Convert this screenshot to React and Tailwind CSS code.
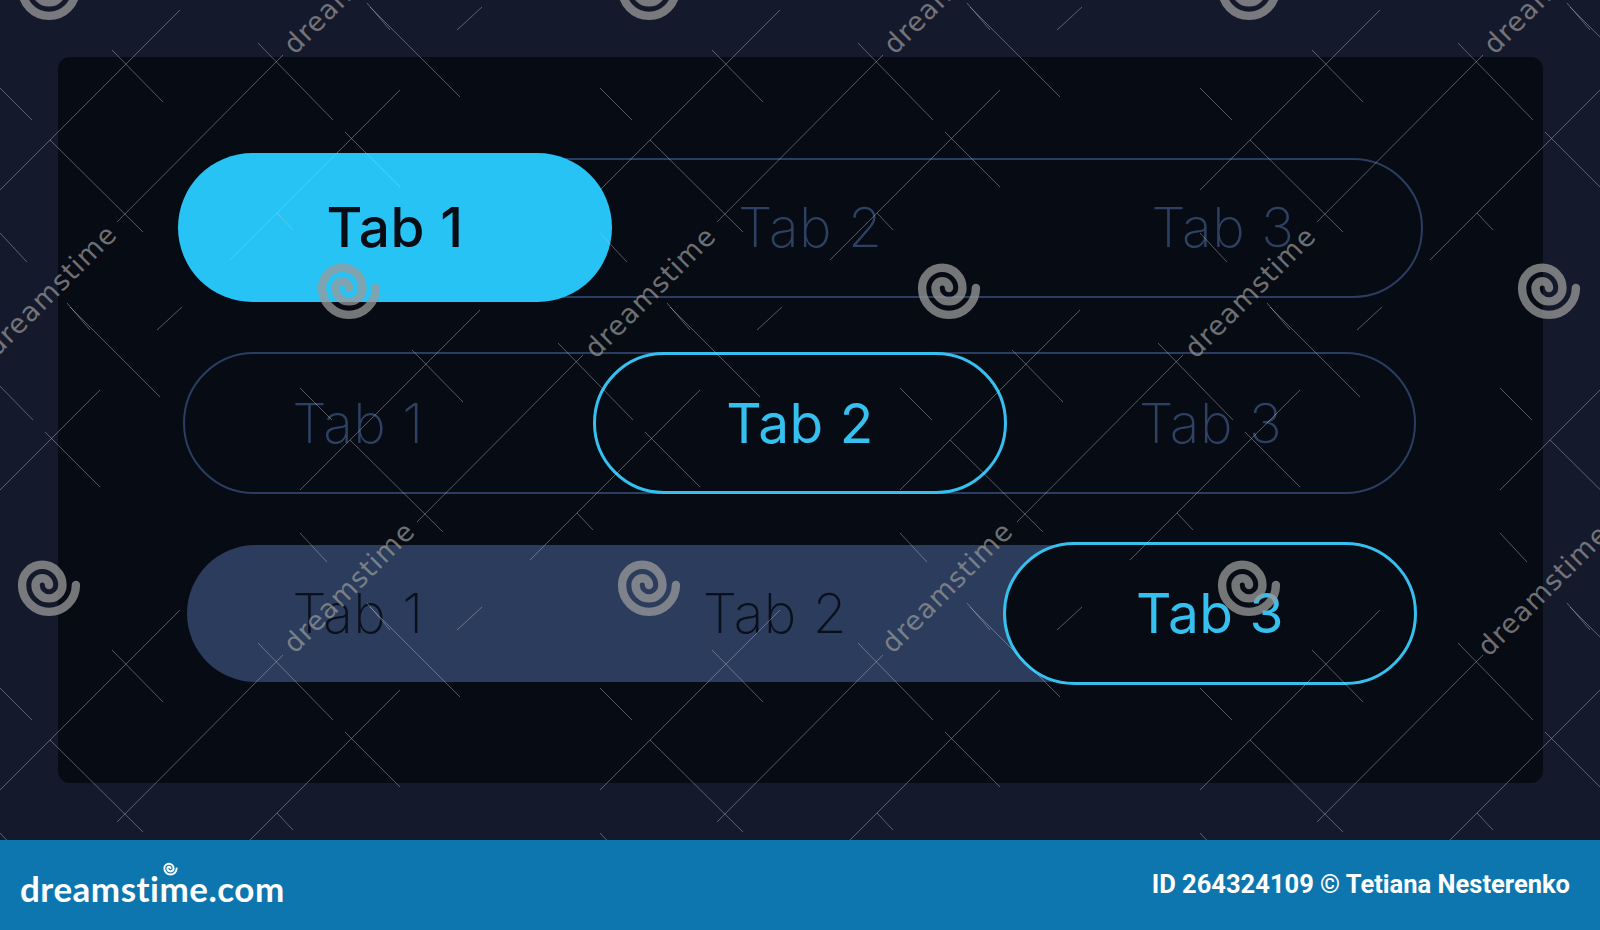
import React from "react";

// Small spiral mark used in the watermark and the footer logo
function Spiral({ className }) {
  return (
    <svg viewBox="14 12 88 88" className={className} fill="none">
      <path
        d="M58 50 A8 8 0 0 0 42 50 A16 16 0 0 0 74 50 A24 24 0 0 0 26 50 A32 32 0 0 0 90 50"
        stroke="currentColor"
        strokeWidth="10"
        strokeLinecap="round"
      />
    </svg>
  );
}

const spirals = [
  { x: 49, y: -6 },
  { x: 649, y: -6 },
  { x: 1249, y: -6 },
  { x: 349, y: 293 },
  { x: 949, y: 293 },
  { x: 1549, y: 293 },
  { x: 49, y: 590 },
  { x: 649, y: 590 },
  { x: 1249, y: 590 },
];

const marks = [
  { x: 349, y: -12 },
  { x: 949, y: -12 },
  { x: 1549, y: -12 },
  { x: 51, y: 290 },
  { x: 650, y: 292 },
  { x: 1250, y: 292 },
  { x: 349, y: 587 },
  { x: 947, y: 587 },
  { x: 1543, y: 590 },
];

// One tile of the crossing hairlines, repeated on a 600px grid with a half-step offset
const hair = [
  [0, 190, 180, 10],
  [112, 50, 163, 102],
  [0, 88, 32, 120],
  [50, 140, 143, 232],
  [117, 222, 283, 55],
  [230, 260, 400, 90],
  [258, 43, 333, 120],
  [345, 132, 400, 187],
  [277, 213, 293, 230],
  [370, 7, 460, 97],
  [0, 233, 27, 262],
  [67, 303, 90, 330],
  [157, 330, 182, 307],
];

const tiles = [];
for (let j = -1; j <= 3; j++) {
  for (let i = -1; i <= 3; i++) {
    tiles.push([i * 600 + (Math.abs(j) % 2) * 300, j * 300]);
  }
}

function Watermark() {
  return (
    <div className="pointer-events-none absolute inset-0">
      <svg className="absolute inset-0 w-[1600px] h-[930px]" viewBox="0 0 1600 930">
        {tiles.map(([ox, oy], t) => (
          <g key={t} transform={`translate(${ox} ${oy})`} stroke="#c2c6ce" strokeOpacity="0.42" strokeWidth="1">
            {hair.map(([x1, y1, x2, y2], k) => (
              <line key={k} x1={x1} y1={y1} x2={x2} y2={y2} />
            ))}
          </g>
        ))}
      </svg>
      {spirals.map((s, i) => (
        <div
          key={"s" + i}
          className="absolute w-[74px] h-[74px] -translate-x-1/2 -translate-y-1/2 text-[#9a9a9a] opacity-75"
          style={{ left: s.x, top: s.y }}
        >
          <Spiral className="w-full h-full" />
        </div>
      ))}
      {marks.map((m, i) => (
        <div
          key={"m" + i}
          className="absolute -translate-x-1/2 -translate-y-1/2 -rotate-45 text-[#9a9a9a] opacity-70 font-['DejaVu_Sans',sans-serif] text-[27px] leading-none tracking-[1px]"
          style={{ left: m.x, top: m.y }}
        >
          dreamstime
        </div>
      ))}
    </div>
  );
}

export default function App() {
  return (
    <div className="relative w-[1600px] h-[930px] overflow-hidden bg-[#141a2c] flex flex-col font-['Inter',sans-serif]">
      <div className="h-[840px] pt-[57px] pb-[57px] pl-[58px] pr-[57px]">
        <div className="h-full rounded-[12px] bg-[#070b14] pl-[120px] pt-[96px] flex flex-col">
          {/* Filled pill variant */}
          <div className="flex items-center h-[149px]">
            <div className="ml-[5px] w-[1240px] h-[140px] rounded-full border-2 border-[#2b3d60] flex items-center">
              <div className="-ml-[7px] w-[434px] h-[149px] shrink-0 rounded-full bg-[#27c3f4] flex items-center justify-center text-[55px] font-medium text-[#080c14] tracking-[0.5px]">
                Tab 1
              </div>
              <div className="flex-1 flex justify-center pr-[16px] text-[55px] font-extralight text-[#2f4163] tracking-[0.5px]">
                Tab 2
              </div>
              <div className="flex-1 flex justify-center text-[55px] font-extralight text-[#2f4163] tracking-[0.5px]">
                Tab 3
              </div>
            </div>
          </div>

          {/* Outlined variant */}
          <div className="mt-[50px] ml-[5px] w-[1233px] h-[142px] rounded-full border-2 border-[#2b3d60] flex items-center">
            <div className="w-[408px] flex justify-center pr-[62px] text-[55px] font-extralight text-[#2f4163] tracking-[0.5px]">
              Tab 1
            </div>
            <div className="w-[414px] h-[142px] shrink-0 rounded-full border-[3px] border-[#35c0ef] flex items-center justify-center text-[55px] font-normal text-[#35c0ef] tracking-[0.5px]">
              Tab 2
            </div>
            <div className="flex-1 flex justify-center text-[55px] font-extralight text-[#2f4163] tracking-[0.5px]">
              Tab 3
            </div>
          </div>

          {/* Segmented variant */}
          <div className="mt-[48px] ml-[9px] h-[143px] flex items-center">
            <div className="w-[1000px] h-[137px] shrink-0 rounded-l-full bg-[#2b3c5c] flex items-center">
              <div className="w-[342px] flex justify-center text-[55px] font-extralight text-[#0a0f1c] tracking-[0.5px]">
                Tab 1
              </div>
              <div className="w-[492px] flex justify-center text-[55px] font-extralight text-[#0a0f1c] tracking-[0.5px]">
                Tab 2
              </div>
            </div>
            <div className="-ml-[184px] w-[414px] h-[143px] shrink-0 rounded-full border-[3px] border-[#35c0ef] bg-[#070b14] flex items-center justify-center text-[55px] font-normal text-[#35c0ef] tracking-[0.5px]">
              Tab 3
            </div>
          </div>
        </div>
      </div>

      <Watermark />

      <footer className="relative h-[90px] bg-[#0e76ae] flex items-center justify-between pl-[20px] pr-[30px]">
        <div className="relative mt-[6px] text-white font-['Lato',sans-serif] font-bold text-[35px] leading-none tracking-[0.5px]">
          dreamstime.com
          <Spiral className="absolute left-[142px] -top-[10px] w-[17px] h-[17px] text-white" />
        </div>
        <div className="text-white font-['Roboto',sans-serif] font-bold text-[25.5px] leading-none">
          ID 264324109 © Tetiana Nesterenko
        </div>
      </footer>
    </div>
  );
}
